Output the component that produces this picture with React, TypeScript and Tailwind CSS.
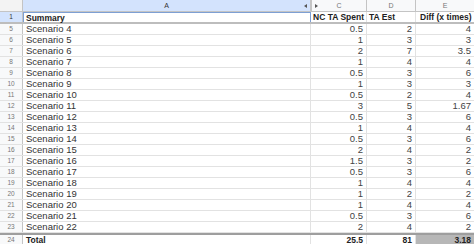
import React from 'react';

const rows: [number, string, string, string, string][] = [
  [5, 'Scenario 4', '0.5', '2', '4'],
  [6, 'Scenario 5', '1', '3', '3'],
  [7, 'Scenario 6', '2', '7', '3.5'],
  [8, 'Scenario 7', '1', '4', '4'],
  [9, 'Scenario 8', '0.5', '3', '6'],
  [10, 'Scenario 9', '1', '3', '3'],
  [11, 'Scenario 10', '0.5', '2', '4'],
  [12, 'Scenario 11', '3', '5', '1.67'],
  [13, 'Scenario 12', '0.5', '3', '6'],
  [14, 'Scenario 13', '1', '4', '4'],
  [15, 'Scenario 14', '0.5', '3', '6'],
  [16, 'Scenario 15', '2', '4', '2'],
  [17, 'Scenario 16', '1.5', '3', '2'],
  [18, 'Scenario 17', '0.5', '3', '6'],
  [19, 'Scenario 18', '1', '4', '4'],
  [20, 'Scenario 19', '1', '2', '2'],
  [21, 'Scenario 20', '1', '4', '4'],
  [22, 'Scenario 21', '0.5', '3', '6'],
  [23, 'Scenario 22', '2', '4', '2'],
];

export default function App() {
  return (
    <div className="w-[474px] h-[244px] overflow-hidden bg-white text-[#222] font-['Liberation_Sans',Arial,sans-serif]">
      {/* column headers */}
      <div className="flex h-[12px] text-[7px] text-[#777] leading-[11px]">
        <div className="w-[23px] shrink-0 bg-[#f3f3f3] border-r border-b border-[#c4c4c4]" />
        <div className="relative w-[288px] shrink-0 bg-[#d3e3fd] border-r border-b border-[#c4c4c4] text-center text-[#333]">
          A
          <span className="absolute right-[3px] top-[4px] w-0 h-0 border-y-[2px] border-y-transparent border-r-[3px] border-r-[#555]" />
        </div>
        <div className="relative w-[56px] shrink-0 bg-[#f8f9fa] border-l border-r border-b border-[#c4c4c4] text-center">
          C
          <span className="absolute left-[3px] top-[4px] w-0 h-0 border-y-[2px] border-y-transparent border-l-[3px] border-l-[#555]" />
        </div>
        <div className="w-[49px] shrink-0 bg-[#f8f9fa] border-r border-b border-[#c4c4c4] text-center">D</div>
        <div className="w-[58px] shrink-0 bg-[#f8f9fa] border-b border-[#c4c4c4] text-center">E</div>
      </div>

      {/* frozen row 1 */}
      <div className="flex h-[12px] text-[8.5px] font-bold leading-[10px] whitespace-nowrap border-b-2 border-[#bdbdbd]">
        <div className="w-[23px] shrink-0 bg-[#d3e3fd] border-r border-[#c4c4c4] text-center text-[6.5px] font-normal text-[#333]">1</div>
        <div className="w-[288px] shrink-0 px-[2px] border-[1.5px] border-b-0 border-[#7d9fd4]">Summary</div>
        <div className="w-[56px] shrink-0 pl-[2px] border-r border-[#e2e2e2]">NC TA Spent</div>
        <div className="w-[49px] shrink-0 pl-[2px] border-r border-[#e2e2e2]">TA Est</div>
        <div className="w-[58px] shrink-0 pl-[4px]">Diff (x times)</div>
      </div>

      {rows.map(([n, name, c, d, e]) => (
        <div key={n} className="flex h-[11px] text-[9.5px] leading-[10px] border-b border-[#e2e2e2]">
          <div className="w-[23px] shrink-0 bg-[#f8f9fa] border-r border-[#c4c4c4] text-center text-[6.5px] text-[#777]">{n}</div>
          <div className="w-[288px] shrink-0 px-[3px] border-r border-[#e2e2e2] text-[#333]">{name}</div>
          <div className="w-[56px] shrink-0 px-[3px] border-r border-[#e2e2e2] text-right text-[#444]">{c}</div>
          <div className="w-[49px] shrink-0 px-[3px] border-r border-[#e2e2e2] text-right text-[#444]">{d}</div>
          <div className="w-[58px] shrink-0 px-[3px] text-right text-[#444]">{e}</div>
        </div>
      ))}

      {/* total */}
      <div className="flex h-[12px] text-[8.5px] font-bold leading-[10px] border-t-2 border-[#9e9e9e]">
        <div className="w-[23px] shrink-0 bg-[#f8f9fa] border-r border-[#c4c4c4] text-center text-[6.5px] font-normal text-[#777]">24</div>
        <div className="w-[288px] shrink-0 px-[3px] border-r border-[#e2e2e2]">Total</div>
        <div className="w-[56px] shrink-0 px-[3px] border-r border-[#e2e2e2] text-right">25.5</div>
        <div className="w-[49px] shrink-0 px-[3px] border-r border-[#e2e2e2] text-right">81</div>
        <div className="w-[58px] shrink-0 px-[3px] bg-[#b7b7b7] text-right">3.18</div>
      </div>
    </div>
  );
}
